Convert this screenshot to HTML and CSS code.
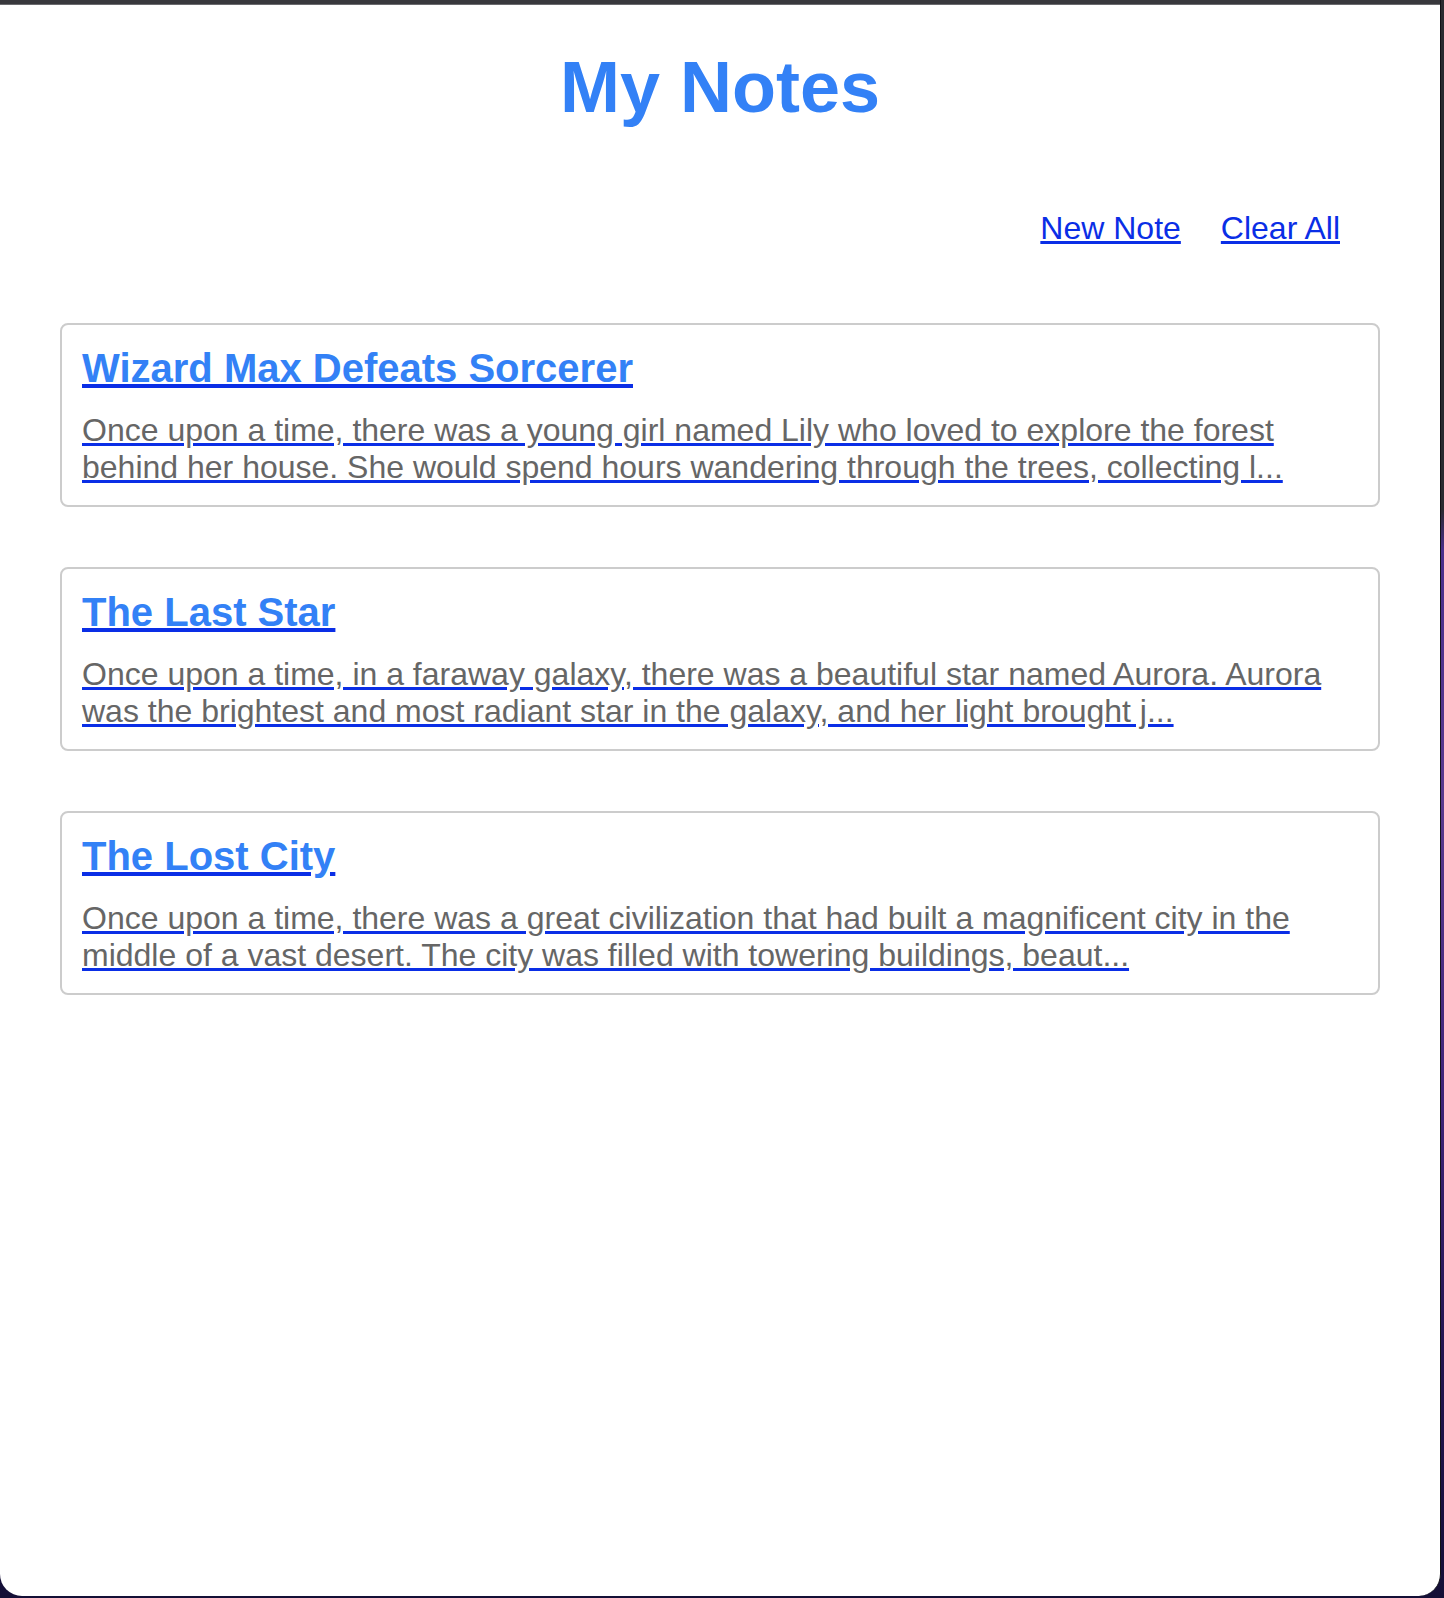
FILE: index.html
```html
<!DOCTYPE html>
<html lang="en">
<head>
<meta charset="utf-8">
<title>My Notes</title>
<link rel="stylesheet" href="styles.css">
</head>
<body>
<div class="window">
  <div class="titlebar"></div>
  <h1 class="page-title">My Notes</h1>
  <nav class="actions">
    <a href="#" class="action">New Note</a>
    <a href="#" class="action">Clear All</a>
  </nav>
  <main class="notes">
    <a href="#" class="note">
      <h2 class="note-title">Wizard Max Defeats Sorcerer</h2>
      <p class="note-body">Once upon a time, there was a young girl named Lily who loved to explore the forest behind her house. She would spend hours wandering through the trees, collecting l...</p>
    </a>
    <a href="#" class="note">
      <h2 class="note-title">The Last Star</h2>
      <p class="note-body">Once upon a time, in a faraway galaxy, there was a beautiful star named Aurora. Aurora was the brightest and most radiant star in the galaxy, and her light brought j...</p>
    </a>
    <a href="#" class="note">
      <h2 class="note-title">The Lost City</h2>
      <p class="note-body">Once upon a time, there was a great civilization that had built a magnificent city in the middle of a vast desert. The city was filled with towering buildings, beaut...</p>
    </a>
  </main>
</div>
</body>
</html>
```

FILE: styles.css
```css
html, body {
  margin: 0;
  padding: 0;
}

body {
  width: 1444px;
  height: 1598px;
  overflow: hidden;
  font-family: "Liberation Sans", Arial, Helvetica, sans-serif;
  background: linear-gradient(to bottom,
    #2a2a30 0px,
    #2a2a30 510px,
    #4a2f8c 550px,
    #5a3a8e 800px,
    #3e2478 1100px,
    #231550 1350px,
    #140f36 1598px);
}

.window {
  width: 1440px;
  height: 1596px;
  background: #ffffff;
  border-right: 1px solid #111116;
  border-radius: 0 0 22px 22px;
  overflow: hidden;
}

.titlebar {
  height: 4px;
  background: #38383d;
  border-bottom: 1px solid #6a6a6e;
}

.page-title {
  margin: 41px 0 0;
  font-size: 72px;
  font-weight: bold;
  line-height: normal;
  text-align: center;
  color: #3381f6;
}

.actions {
  display: flex;
  justify-content: flex-end;
  gap: 40px;
  margin-top: 82px;
  padding-right: 100px;
}

.action {
  font-size: 32px;
  line-height: normal;
  color: #0a2ee6;
}

.notes {
  margin-top: 76px;
  padding: 0 60px;
}

.note {
  display: block;
  margin-bottom: 60px;
  padding: 21px 20px 19px;
  border: 2px solid #cccccc;
  border-radius: 8px;
  color: #0a2ee6;
}

.note-title {
  margin: 0 0 21px;
  font-size: 40px;
  font-weight: bold;
  line-height: normal;
  color: #3381f6;
}

.note-body {
  margin: 0;
  font-size: 32px;
  line-height: normal;
  color: #666666;
}
```
